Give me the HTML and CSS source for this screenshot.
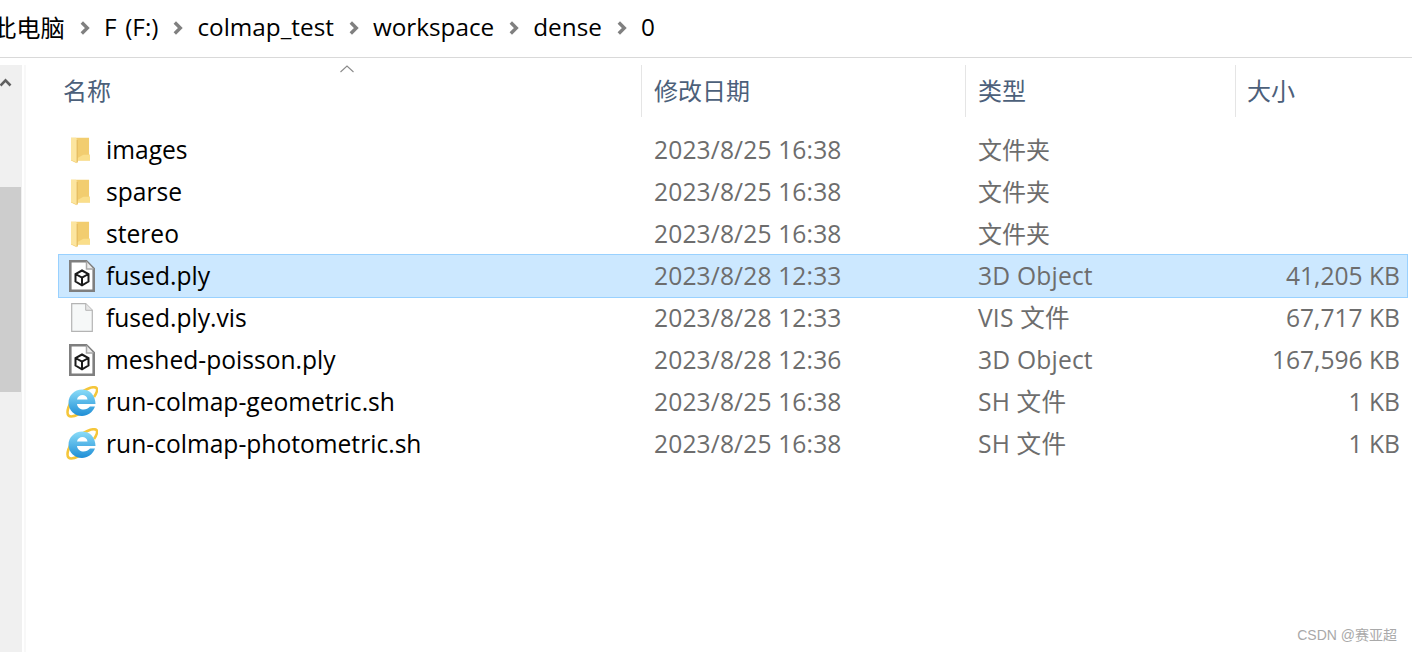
FILE: index.html
```html
<!DOCTYPE html>
<html lang="zh">
<head>
<meta charset="utf-8">
<title>dense/0</title>
<link rel="stylesheet" href="styles.css">
</head>
<body>
<svg class="defs" width="0" height="0" aria-hidden="true">
  <defs>
    <symbol id="chev" viewBox="0 0 10 14"><path d="M1.800 1.500 7.300 7 1.800 12.500" fill="none" stroke="#808080" stroke-width="3.400"/></symbol>
    <symbol id="folder" viewBox="3 1 20 27">
      <path d="M3 1h19v18h1v6H9v3l-6-3z" fill="#f2cd6f"/>
      <path d="M16 19h7v6H9v-2z" fill="#fade8a"/>
      <path d="M3 1h5l2 2v24.500l-7-3z" fill="#fce59f"/>
      <path d="M9.500 3v24" stroke="#dcae4c" stroke-width="1"/>
    </symbol>
    <symbol id="obj" viewBox="0 0 26 32">
      <path d="M1.300 1.300h16l7.400 7.400v22h-23.400z" fill="#fff" stroke="#7f7f7f" stroke-width="2.600"/>
      <path d="M17.500 1.500v7.400h7" fill="#ececec" stroke="#a8a8a8" stroke-width="1.500"/>
      <path d="M13 10.500l6.500 3.500v7.500l-6.500 3.800-6.500-3.800V14zM6.500 14l6.500 3.700 6.500-3.700M13 17.700v7.600" fill="none" stroke="#1a1a1a" stroke-width="2"/>
    </symbol>
    <symbol id="blank" viewBox="0 0 22 29">
      <path d="M.7.700h14l6.600 6.600v21H.7z" fill="#f6f8f8" stroke="#b4b4b4" stroke-width="1.200"/>
      <path d="M14.700.700v6.600h6.600" fill="#e6e6e6" stroke="#b4b4b4"/>
    </symbol>
    <linearGradient id="ie" x1="0" y1="0" x2="0" y2="1"><stop offset="0" stop-color="#8adcf8"/><stop offset="1" stop-color="#1f8ed6"/></linearGradient>
    <symbol id="ie-icon" viewBox="0 0 32 32">
      <path d="M14 7C22 2 28 0 30.500 2 32 4 30 8 28 11M6 14C2 21 .5 27 2.500 29.500 4.500 31.500 9 30 13 28" fill="none" stroke="#f5c63a" stroke-width="2.600"/>
      <path d="M16 3.500C24 3.500 29.500 9.500 29.500 18H11C11.500 24 20 25.500 24 20.500H29C26.500 26.500 21.500 30 16 30 8.500 30 2.500 24 2.500 16.700 2.500 9.500 8.500 3.500 16 3.500ZM11 13.500H21.500C21 7.500 12 7.500 11 13.500Z" fill="url(#ie)" fill-rule="evenodd"/>
    </symbol>
  </defs>
</svg>

<nav class="crumbs">
  <span class="crumb first">此电脑</span>
  <svg class="chev"><use href="#chev"/></svg>
  <span class="crumb">F (F:)</span>
  <svg class="chev"><use href="#chev"/></svg>
  <span class="crumb">colmap_test</span>
  <svg class="chev"><use href="#chev"/></svg>
  <span class="crumb">workspace</span>
  <svg class="chev"><use href="#chev"/></svg>
  <span class="crumb">dense</span>
  <svg class="chev"><use href="#chev"/></svg>
  <span class="crumb">0</span>
</nav>

<main class="pane">
  <div class="scrollbar">
    <div class="arrow"><svg width="14" height="10" viewBox="0 0 14 10"><path d="M.5 8.500 5.500 3.300 10.500 8.500" fill="none" stroke="#606060" stroke-width="2.600"/></svg></div>
    <div class="thumb"></div>
  </div>
  <section class="list">
    <header class="head">
      <div class="hcell name">名称<svg class="sort" width="16" height="8" viewBox="0 0 16 8"><path d="M1.500 7 8 1l6.500 6" fill="none" stroke="#8a8a8a" stroke-width="1.100"/></svg></div>
      <div class="hcell date">修改日期</div>
      <div class="hcell type">类型</div>
      <div class="hcell size">大小</div>
    </header>
    <div class="rows">
      <div class="row"><div class="cell name"><svg class="ico folder"><use href="#folder"/></svg>images</div><div class="cell date">2023/8/25 16:38</div><div class="cell type cjk">文件夹</div><div class="cell size"></div></div>
      <div class="row"><div class="cell name"><svg class="ico folder"><use href="#folder"/></svg>sparse</div><div class="cell date">2023/8/25 16:38</div><div class="cell type cjk">文件夹</div><div class="cell size"></div></div>
      <div class="row"><div class="cell name"><svg class="ico folder"><use href="#folder"/></svg>stereo</div><div class="cell date">2023/8/25 16:38</div><div class="cell type cjk">文件夹</div><div class="cell size"></div></div>
      <div class="row selected"><div class="cell name"><svg class="ico obj"><use href="#obj"/></svg>fused.ply</div><div class="cell date">2023/8/28 12:33</div><div class="cell type">3D Object</div><div class="cell size">41,205 KB</div></div>
      <div class="row"><div class="cell name"><svg class="ico blank"><use href="#blank"/></svg>fused.ply.vis</div><div class="cell date">2023/8/28 12:33</div><div class="cell type">VIS 文件</div><div class="cell size">67,717 KB</div></div>
      <div class="row"><div class="cell name"><svg class="ico obj"><use href="#obj"/></svg>meshed-poisson.ply</div><div class="cell date">2023/8/28 12:36</div><div class="cell type">3D Object</div><div class="cell size">167,596 KB</div></div>
      <div class="row"><div class="cell name"><svg class="ico ie"><use href="#ie-icon"/></svg>run-colmap-geometric.sh</div><div class="cell date">2023/8/25 16:38</div><div class="cell type">SH 文件</div><div class="cell size">1 KB</div></div>
      <div class="row"><div class="cell name"><svg class="ico ie"><use href="#ie-icon"/></svg>run-colmap-photometric.sh</div><div class="cell date">2023/8/25 16:38</div><div class="cell type">SH 文件</div><div class="cell size">1 KB</div></div>
    </div>
  </section>
</main>
<div class="mark">CSDN @赛亚超</div>
</body>
</html>
```

FILE: styles.css
```css
* { box-sizing: border-box; }
html, body { margin: 0; height: 100%; overflow: hidden; background: #fff; }
body {
  font-family: "Open Sans", "Noto Sans CJK SC", sans-serif;
  font-size: 24.6px;
  color: #000;
  display: flex;
  flex-direction: column;
  height: 652px;
  position: relative;
}
.defs { position: absolute; }

.crumbs {
  height: 58px;
  flex: none;
  display: flex;
  align-items: center;
  border-bottom: 1px solid #d9d9d9;
  overflow: hidden;
  padding-bottom: 5px;
  font-size: 24.3px;
  word-spacing: 0.1em;
}
.crumb { white-space: nowrap; }
.crumb.first { margin-left: -8px; }
.chev { width: 10px; height: 14px; margin: 3px 14px 0 15px; flex: none; }

.pane { flex: 1; display: flex; padding-top: 7px; min-height: 0; }
.scrollbar {
  width: 22px;
  flex: none;
  background: #f0f0f0;
  border-right: 1px solid #f0f0f0;
  display: flex;
  flex-direction: column;
}
.arrow { height: 122px; padding-top: 12px; }
.arrow svg { display: block; }
.thumb { height: 205px; background: #cdcdcd; }

.list { flex: 1; padding-left: 14px; padding-right: 4px; border-left: 2px solid #f8f8f8; margin-left: 2px; }
.head { display: grid; grid-template-columns: 602px 324px 270px 1fr; height: 51px; }
.hcell {
  position: relative;
  color: #4c607a;
  padding-left: 12px;
  border-right: 1px solid #e5e5e5;
  line-height: 52px;
  font-size: 24px;
}
.hcell.name { padding-left: 23px; }
.hcell.size { border-right: 0; padding-left: 11px; }
.sort { position: absolute; left: 299px; top: 0; }

.rows { padding-top: 13px; margin-left: 18px; }
.row {
  display: grid;
  grid-template-columns: 595px 324px 269px 1fr;
  height: 42px;
  align-items: center;
  border: 1px solid transparent;
  white-space: nowrap;
}
.row.selected { background: #cce8ff; border-color: #99d1ff; height: 44px; margin: -1px 0; }
.cell { color: #6d6d6d; line-height: 40px; }
.cell.date { letter-spacing: 0.13px; }
.cell.type { letter-spacing: 0.2px; }
.cell.type.cjk { font-size: 24px; letter-spacing: 0; }
.cell.name { color: #000; display: flex; align-items: center; position: relative; padding-left: 47px; }
.cell.size { text-align: right; padding-right: 7px; }
.ico { position: absolute; }
.ico.folder { left: 12px; top: 7px; width: 19px; height: 27px; }
.ico.obj { left: 10px; top: 4px; width: 26px; height: 32px; }
.ico.blank { left: 12px; top: 5px; width: 22px; height: 29px; }
.ico.ie { left: 7px; top: 4px; width: 32px; height: 32px; }

.mark {
  position: absolute;
  right: 15px;
  bottom: 8px;
  font-family: "Liberation Sans", "Noto Sans CJK SC", sans-serif;
  font-size: 14px;
  color: #a9a9a9;
}
```
